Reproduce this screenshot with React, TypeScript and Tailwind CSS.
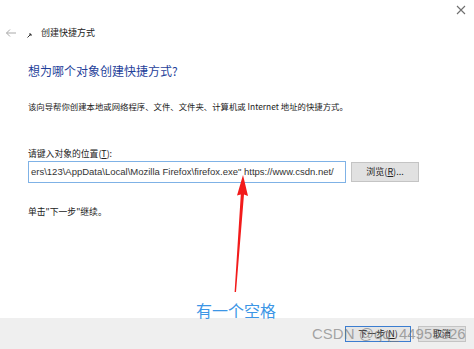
import React from 'react'

const cjk = { fontFamily: '"Noto Sans CJK SC", "Liberation Sans", sans-serif' }
const latin = { fontFamily: '"Liberation Sans", "Noto Sans CJK SC", sans-serif' }

const RedArrow = () => (
  <svg className="absolute left-0 top-0 pointer-events-none" width="474" height="349" viewBox="0 0 474 349">
    <polygon points="243,175 248,196 244,194.5 236,292 234.6,292 240.8,194.5 237,195.5" fill="#f21b1b" />
  </svg>
)

const App = () => {
  return (
    <div className="relative w-[474px] h-[349px] bg-white flex flex-col overflow-hidden" style={cjk}>
      {/* close */}
      <div className="h-[20px] flex justify-end items-center pr-[8px]">
        <svg width="10" height="10" viewBox="0 0 10 10">
          <path d="M1 1 L9 9 M9 1 L1 9" stroke="#6f6f6f" strokeWidth="1.1" />
        </svg>
      </div>

      {/* header */}
      <div className="h-[26px] flex items-center pl-[5px]">
        <svg width="12" height="10" viewBox="0 0 12 10">
          <path d="M11 5 H1.5 M5 1.5 L1.5 5 L5 8.5" stroke="#a9a9a9" strokeWidth="1" fill="none" />
        </svg>
        <svg className="ml-[10px] mt-[4px]" width="5" height="5" viewBox="0 0 5 5">
          <path d="M0.5 4.5 L4 1 M2 1 H4 V3" stroke="#333" strokeWidth="1" fill="none" />
        </svg>
        <span className="ml-[9px] text-[9px] leading-[12px] text-[#222]">创建快捷方式</span>
      </div>

      <div className="pl-[28px] flex flex-col">
        <h1 className="mt-[16px] text-[12px] leading-[18px] text-[#1f3f9a]">想为哪个对象创建快捷方式?</h1>
        <p className="mt-[19px] text-[8.4px] leading-[14px] text-[#222]">
          该向导帮你创建本地或网络程序、文件、文件夹、计算机或 Internet 地址的快捷方式。
        </p>
        <p className="mt-[34px] text-[8.8px] leading-[14px] text-[#222]">请键入对象的位置(<span className="underline">T</span>):</p>
        <div className="flex items-center">
          <div className="w-[318px] h-[22px] border border-[#7fb2e6] flex items-center pl-[2px] overflow-hidden whitespace-nowrap">
            <span className="text-[9.5px] text-[#333]" style={latin}>
              ers\123\AppData\Local\Mozilla Firefox\firefox.exe" https://www.csdn.net/
            </span>
          </div>
          <div className="ml-[5px] w-[68px] h-[20px] bg-[#e1e1e1] border border-[#c4c4c4] flex items-center justify-center text-[9px] text-[#222]">
            浏览(<span className="underline">R</span>)...
          </div>
        </div>
        <p className="mt-[22px] text-[8.8px] leading-[14px] text-[#222]">单击"下一步"继续。</p>
      </div>

      <div className="flex-1" />

      {/* footer */}
      <div className="h-[31px] bg-[#efefef] flex items-center justify-end pr-[8px] gap-[7px]">
        <div className="w-[66px] h-[16px] border border-[#3b7dd0] bg-[#e5e5e5] flex items-center justify-center text-[9px] text-[#222]">
          下一步(<span className="underline">N</span>)
        </div>
        <div className="w-[48px] h-[16px] border border-[#c4c4c4] bg-[#e1e1e1] flex items-center justify-center text-[9px] text-[#222]">
          取消
        </div>
      </div>

      <RedArrow />

      <div className="absolute left-[196px] top-[299px] text-[16px] leading-[22px] text-[#3c96e6]">有一个空格</div>

      <div
        className="absolute left-[312px] top-[325px] text-[15px] leading-[18px] text-[rgba(120,120,120,0.65)] pointer-events-none"
        style={latin}
      >
        CSDN @qq_44955826
      </div>
    </div>
  )
}

export default App
